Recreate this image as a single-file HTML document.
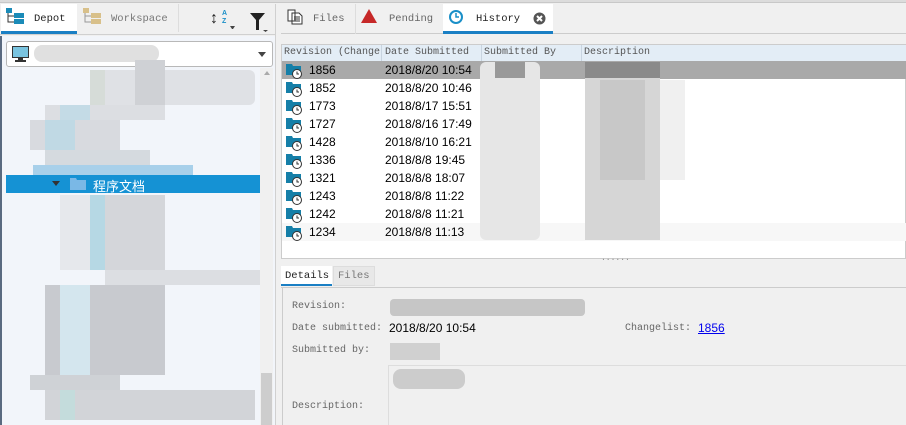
<!DOCTYPE html>
<html><head><meta charset="utf-8"><style>
*{margin:0;padding:0;box-sizing:border-box}
body{width:906px;height:425px;overflow:hidden;background:#f0f0f0;font-family:"Liberation Mono",monospace;font-size:10px;color:#333;position:relative}
.a{position:absolute}
.m{font-family:"Liberation Mono",monospace;font-size:10px;color:#444}
.s{font-family:"Liberation Sans",sans-serif;font-size:12px;color:#000}
</style></head><body>
<div class="a" style="left:0;top:0;width:906px;height:3px;background:#dcdcdc;border-bottom:1px solid #c8c8c8"></div>
<div class="a" style="left:0;top:4px;width:276px;height:30px;background:#f0f0f0"></div>
<div class="a" style="left:1px;top:4px;width:76px;height:30px;background:#fff;border-bottom:3px solid #1a7fc4"></div>
<svg class="a" style="left:6px;top:8px" width="20" height="18"><rect x="0" y="0" width="6" height="5" fill="#1b8bb8"/><rect x="8" y="5" width="10" height="5" fill="#1b8bb8"/><rect x="8" y="11" width="10" height="5" fill="#1b8bb8"/><path d="M2 5V14H8M2 8H8" stroke="#333" fill="none"/></svg>
<div class="a m" style="left:34px;top:13px;color:#222;font-size:10.5px">Depot</div>
<svg class="a" style="left:83px;top:8px" width="20" height="18"><rect x="0" y="0" width="6" height="5" fill="#d8c08a"/><rect x="8" y="5" width="10" height="5" fill="#d8c08a"/><rect x="8" y="11" width="10" height="5" fill="#d8c08a"/><path d="M2 5V14H8M2 8H8" stroke="#999" fill="none"/></svg>
<div class="a m" style="left:111px;top:13px;color:#777;font-size:10.5px">Workspace</div>
<div class="a" style="left:178px;top:4px;width:1px;height:28px;background:#ddd"></div>
<div class="a" style="left:210px;top:10px;font:bold 16px 'Liberation Sans';color:#222">↕</div>
<div class="a" style="left:222px;top:10px;font:bold 7px 'Liberation Sans';color:#1a8fc8;line-height:8px">A<br>Z</div>
<div class="a" style="left:230px;top:26px;width:5px;border-top:3px solid #444;border-left:2px solid transparent;border-right:2px solid transparent"></div>
<svg class="a" style="left:250px;top:13px" width="20" height="20"><path d="M0 0H15L9 7V17H6V7Z" fill="#222"/><path d="M13 17h5l-2.5 2z" fill="#444"/></svg>
<div class="a" style="left:0;top:34px;width:276px;height:1px;background:#d0d0d0"></div>
<div class="a" style="left:0;top:36px;width:275px;height:389px;background:#f2f5fa;border-left:2px solid #5a6a80"></div>
<div class="a" style="left:6px;top:41px;width:267px;height:26px;background:#fff;border:1px solid #b8b8b8;border-radius:3px"></div>
<svg class="a" style="left:12px;top:46px" width="18" height="16"><rect x="0.5" y="0.5" width="16" height="11" fill="#7ac4e0" stroke="#333"/><rect x="6" y="12" width="5" height="2" fill="#333"/><rect x="3" y="14" width="11" height="2" fill="#333"/></svg>
<div class="a" style="left:258px;top:52px;border-top:5px solid #444;border-left:4px solid transparent;border-right:4px solid transparent"></div>
<div class="a" style="left:34px;top:45px;width:125px;height:17px;background:#d8d8d8;border-radius:8px;opacity:.8"></div>
<div class="a" style="left:260px;top:68px;width:13px;height:357px;background:#f0f0f0"></div>
<div class="a" style="left:264px;top:71px;border-bottom:4px solid #aaa;border-left:3px solid transparent;border-right:3px solid transparent"></div>
<div class="a" style="left:261px;top:373px;width:11px;height:52px;background:#cdcdcd"></div>
<div class="a" style="left:90px;top:70px;width:165px;height:35px;background:#dfe1e5;border-radius:6px"></div>
<div class="a" style="left:90px;top:70px;width:15px;height:35px;background:#d6dcd8"></div>
<div class="a" style="left:135px;top:60px;width:30px;height:45px;background:#cfd1d5"></div>
<div class="a" style="left:45px;top:105px;width:120px;height:15px;background:#dcdee2"></div>
<div class="a" style="left:60px;top:105px;width:30px;height:15px;background:#c4dbe6"></div>
<div class="a" style="left:30px;top:120px;width:90px;height:30px;background:#d8dadf"></div>
<div class="a" style="left:45px;top:120px;width:30px;height:30px;background:#c0d9e4"></div>
<div class="a" style="left:45px;top:150px;width:105px;height:15px;background:#d5dadf"></div>
<div class="a" style="left:33px;top:165px;width:160px;height:10px;background:#a8d0ea"></div>
<div class="a" style="left:60px;top:195px;width:105px;height:75px;background:#d4d6da"></div>
<div class="a" style="left:90px;top:195px;width:15px;height:75px;background:#b6d8e4"></div>
<div class="a" style="left:60px;top:195px;width:30px;height:75px;background:#e6e8ec"></div>
<div class="a" style="left:105px;top:270px;width:155px;height:15px;background:#dcdee2"></div>
<div class="a" style="left:45px;top:285px;width:120px;height:90px;background:#c8cacf"></div>
<div class="a" style="left:60px;top:285px;width:30px;height:90px;background:#d4e6ee"></div>
<div class="a" style="left:30px;top:375px;width:90px;height:15px;background:#cfd2d6"></div>
<div class="a" style="left:45px;top:390px;width:210px;height:30px;background:#d2d4d8"></div>
<div class="a" style="left:60px;top:390px;width:15px;height:30px;background:#c4dcdc"></div>
<div class="a" style="left:6px;top:175px;width:254px;height:18px;background:#1592d4"></div>
<div class="a" style="left:52px;top:181px;border-top:5px solid #333;border-left:4px solid transparent;border-right:4px solid transparent"></div>
<svg class="a" style="left:70px;top:177px" width="16" height="13"><path d="M0 1H6L7 3H16V13H0Z" fill="#7ab8e6"/></svg>
<div class="a" style="left:93px;top:176px;font:13px 'Noto Sans CJK SC',sans-serif;color:#fff">程序文档</div>
<div class="a" style="left:275px;top:4px;width:6px;height:421px;background:#f0f0f0;border-left:1px solid #d0d0d0"></div>
<div class="a" style="left:281px;top:4px;width:625px;height:30px;background:#f0f0f0;border-bottom:1px solid #ccc"></div>
<svg class="a" style="left:287px;top:9px" width="16" height="16"><path d="M1 1H8V12H1Z M5 4H12L15 7V15H5Z" fill="#fff" stroke="#333"/><path d="M7 8H13M7 10H13M7 12H13" stroke="#333"/></svg>
<div class="a m" style="left:313px;top:13px;color:#666;font-size:10.5px">Files</div>
<div class="a" style="left:355px;top:4px;width:1px;height:30px;background:#ddd"></div>
<svg class="a" style="left:361px;top:9px" width="16" height="14"><path d="M8 0L16 14H0Z" fill="#c62828"/></svg>
<div class="a m" style="left:389px;top:13px;color:#666;font-size:10.5px">Pending</div>
<div class="a" style="left:443px;top:4px;width:110px;height:30px;background:#fff;border-bottom:3px solid #1a7fc4"></div>
<svg class="a" style="left:449px;top:10px" width="16" height="16"><circle cx="7" cy="7" r="6" fill="none" stroke="#1a8fc8" stroke-width="2"/><path d="M7 3V7H10" stroke="#1a8fc8" fill="none" stroke-width="1.5"/></svg>
<div class="a m" style="left:476px;top:13px;color:#222;font-size:10.5px">History</div>
<svg class="a" style="left:533px;top:12px" width="13" height="13"><circle cx="6.5" cy="6.5" r="6" fill="#555"/><path d="M4 4L9 9M9 4L4 9" stroke="#fff" stroke-width="2"/></svg>
<div class="a" style="left:281px;top:44px;width:625px;height:215px;background:#fff;border:1px solid #ccc"></div>
<div class="a" style="left:282px;top:45px;width:624px;height:16px;background:#e3edf6"></div>
<div class="a m" style="left:284px;top:47px;color:#555">Revision (Change</div>
<div class="a" style="left:381px;top:45px;width:1px;height:16px;background:#c8d4e0"></div>
<div class="a m" style="left:385px;top:47px;color:#555">Date Submitted</div>
<div class="a" style="left:481px;top:45px;width:1px;height:16px;background:#c8d4e0"></div>
<div class="a m" style="left:484px;top:47px;color:#555">Submitted By</div>
<div class="a" style="left:581px;top:45px;width:1px;height:16px;background:#c8d4e0"></div>
<div class="a m" style="left:584px;top:47px;color:#555">Description</div>
<div class="a" style="left:282px;top:61px;width:624px;height:18px;background:#a9a9a9"></div>
<div class="a" style="left:282px;top:223px;width:624px;height:18px;background:#f7f7f7"></div>
<div class="a" style="left:480px;top:62px;width:60px;height:178px;background:#e6e6e6;border-radius:6px"></div>
<div class="a" style="left:495px;top:62px;width:30px;height:16px;background:#999"></div>
<div class="a" style="left:585px;top:62px;width:75px;height:178px;background:#d6d6d6"></div>
<div class="a" style="left:600px;top:80px;width:45px;height:100px;background:#c8c8c8"></div>
<div class="a" style="left:585px;top:62px;width:75px;height:16px;background:#8a8a8a"></div>
<div class="a" style="left:660px;top:80px;width:25px;height:100px;background:#f0f0f0"></div>
<div class="a s" style="left:309px;top:61px;line-height:18px">1856<br>1852<br>1773<br>1727<br>1428<br>1336<br>1321<br>1243<br>1242<br>1234</div>
<div class="a s" style="left:385px;top:61px;line-height:18px">2018/8/20 10:54<br>2018/8/20 10:46<br>2018/8/17 15:51<br>2018/8/16 17:49<br>2018/8/10 16:21<br>2018/8/8 19:45<br>2018/8/8 18:07<br>2018/8/8 11:22<br>2018/8/8 11:21<br>2018/8/8 11:13</div>
<svg class="a" style="left:285px;top:62px" width="18" height="180">
<defs><g id="ic"><path d="M1 2H7L8 4H16V13H1Z" fill="#157fa8"/><circle cx="12" cy="12" r="4.5" fill="#fff" stroke="#333"/><path d="M12 9.5V12H14" stroke="#333" fill="none"/></g></defs>
<use href="#ic" y="0"/><use href="#ic" y="18"/><use href="#ic" y="36"/><use href="#ic" y="54"/><use href="#ic" y="72"/><use href="#ic" y="90"/><use href="#ic" y="108"/><use href="#ic" y="126"/><use href="#ic" y="144"/><use href="#ic" y="162"/></svg>
<div class="a m" style="left:601px;top:254px;font-size:8px;color:#888">......</div>
<div class="a" style="left:281px;top:266px;width:51px;height:20px;background:#fff;border-bottom:2px solid #1a7fc4"></div>
<div class="a m" style="left:285px;top:270px;color:#222;font-size:10.5px">Details</div>
<div class="a" style="left:333px;top:266px;width:42px;height:20px;background:#e8e8e8;border:1px solid #ddd"></div>
<div class="a m" style="left:338px;top:270px;color:#777;font-size:10.5px">Files</div>
<div class="a" style="left:281px;top:287px;width:625px;height:1px;background:#ccc"></div>
<div class="a" style="left:282px;top:288px;width:1px;height:137px;background:#ccc"></div>
<div class="a m" style="left:292px;top:301px;color:#666">Revision:</div>
<div class="a m" style="left:292px;top:323px;color:#666">Date submitted:</div>
<div class="a s" style="left:389px;top:321px">2018/8/20 10:54</div>
<div class="a m" style="left:625px;top:323px;color:#666">Changelist:</div>
<div class="a s" style="left:698px;top:321px;color:#00e;text-decoration:underline">1856</div>
<div class="a m" style="left:292px;top:345px;color:#666">Submitted by:</div>
<div class="a m" style="left:292px;top:401px;color:#666">Description:</div>
<div class="a" style="left:388px;top:365px;width:518px;height:60px;border-left:1px solid #ddd;border-top:1px solid #ddd"></div>
<div class="a" style="left:390px;top:299px;width:195px;height:17px;background:#c6c6c6;border-radius:4px"></div>
<div class="a" style="left:390px;top:343px;width:50px;height:17px;background:#d0d0d0"></div>
<div class="a" style="left:393px;top:369px;width:72px;height:20px;background:#cccccc;border-radius:8px"></div>
</body></html>
